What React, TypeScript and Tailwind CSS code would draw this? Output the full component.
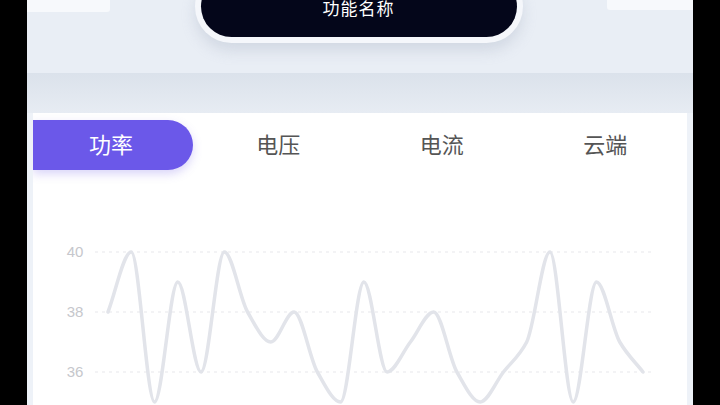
import React from "react";

const tabs = ["功率", "电压", "电流", "云端"];

// values sampled every ~23px across the chart
const values = [38, 40, 35, 39, 36, 40, 38, 37, 38, 36, 35, 39, 36, 37, 38, 36, 35, 36, 37, 40, 35, 39, 37, 36];

const X0 = 75;
const X1 = 610;
const yOf = (v: number) => 82 + (40 - v) * 30;

// monotone cubic (Fritsch-Carlson) -> svg path
const buildPath = (pts: [number, number][]): string => {
  const n = pts.length;
  const dx: number[] = [];
  const m: number[] = [];
  for (let i = 0; i < n - 1; i++) {
    dx.push(pts[i + 1][0] - pts[i][0]);
    m.push((pts[i + 1][1] - pts[i][1]) / dx[i]);
  }
  const t: number[] = [m[0]];
  for (let i = 1; i < n - 1; i++) {
    if (m[i - 1] * m[i] <= 0) t.push(0);
    else t.push((2 * m[i - 1] * m[i]) / (m[i - 1] + m[i]));
  }
  t.push(m[n - 2]);
  let d = `M${pts[0][0]},${pts[0][1]}`;
  for (let i = 0; i < n - 1; i++) {
    const h = dx[i] / 3;
    d += ` C${pts[i][0] + h},${pts[i][1] + t[i] * h} ${pts[i + 1][0] - h},${pts[i + 1][1] - t[i + 1] * h} ${pts[i + 1][0]},${pts[i + 1][1]}`;
  }
  return d;
};

const Chart: React.FC = () => {
  const step = (X1 - X0) / (values.length - 1);
  const pts = values.map((v, i) => [X0 + i * step, yOf(v)] as [number, number]);
  return (
    <svg width="654" height="235" viewBox="0 0 654 235" className="block">
      {[40, 38, 36].map((v) => (
        <g key={v}>
          <line
            x1="62"
            x2="620"
            y1={yOf(v)}
            y2={yOf(v)}
            stroke="#e8e8ec"
            strokeWidth="1.2"
            strokeDasharray="3 4"
          />
          <text
            x="42"
            y={yOf(v) + 5}
            textAnchor="middle"
            fontSize="15"
            fill="#c6c7cc"
            fontFamily="'Liberation Sans', Arial, sans-serif"
          >
            {v}
          </text>
        </g>
      ))}
      <path d={buildPath(pts)} fill="none" stroke="#e2e4ea" strokeWidth="3.5" strokeLinecap="round" strokeLinejoin="round" />
    </svg>
  );
};

const App: React.FC = () => {
  return (
    <div
      className="w-[720px] h-[405px] overflow-hidden bg-black flex"
      style={{ fontFamily: "'Noto Sans CJK SC', 'Noto Sans', sans-serif" }}
    >
      <div className="w-[666px] ml-[27px] flex flex-col bg-[#eef2f8]">
        {/* top area */}
        <div className="h-[73px] bg-[#e9eef5] flex justify-between items-start">
          <div className="w-[83px] h-[12px] bg-[#f7f9fc] rounded-br-[3px]" />
          <div className="mt-[-30px] p-[6px] rounded-[38px] bg-[#f5f7fb] shadow-[0_8px_14px_rgba(160,170,190,0.3)]">
            <div className="w-[316px] h-[61px] rounded-[32px] bg-[#04061a] flex items-start justify-center">
              <span className="text-white text-[17px] leading-[20px] tracking-[1px] mt-[22px]">功能名称</span>
            </div>
          </div>
          <div className="w-[86px] h-[10px] bg-[#f7f9fc] rounded-bl-[3px]" />
        </div>
        {/* band */}
        <div className="h-[40px] bg-gradient-to-b from-[#dbe2eb] to-[#e7ecf3]" />
        {/* card */}
        <div className="flex-1 px-[6px] bg-[#eef2f8]">
          <div className="h-full bg-white overflow-hidden">
            <div className="flex pt-[7px]">
              {tabs.map((t, i) => (
                <div key={t} className="w-[164px] flex justify-start">
                  {i === 0 ? (
                    <div className="w-[160px] h-[50px] rounded-r-full rounded-l-[14px] bg-[#6b58e9] shadow-[0_4px_10px_rgba(107,88,233,0.25)] flex items-center justify-center text-white text-[22px] pb-[3px] pr-[4px]">
                      {t}
                    </div>
                  ) : (
                    <div className="w-full h-[50px] flex items-center justify-center text-[#555555] text-[22px] pb-[3px]">
                      {t}
                    </div>
                  )}
                </div>
              ))}
            </div>
            <Chart />
          </div>
        </div>
      </div>
    </div>
  );
};

export default App;
